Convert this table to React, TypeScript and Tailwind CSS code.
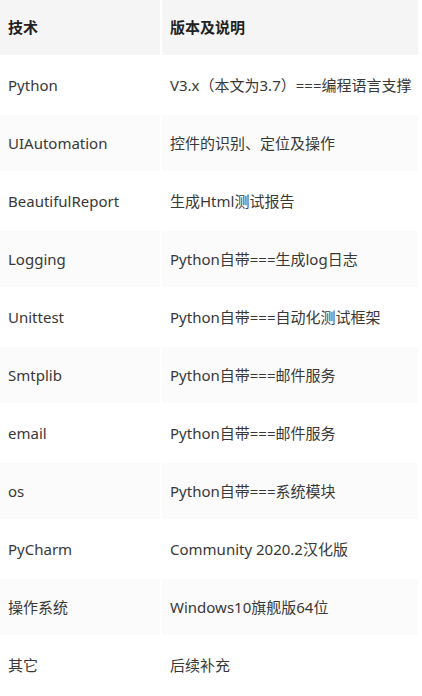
const rows: [string, string][] = [
  ["Python", "V3.x（本文为3.7）===编程语言支撑"],
  ["UIAutomation", "控件的识别、定位及操作"],
  ["BeautifulReport", "生成Html测试报告"],
  ["Logging", "Python自带===生成log日志"],
  ["Unittest", "Python自带===自动化测试框架"],
  ["Smtplib", "Python自带===邮件服务"],
  ["email", "Python自带===邮件服务"],
  ["os", "Python自带===系统模块"],
  ["PyCharm", "Community 2020.2汉化版"],
  ["操作系统", "Windows10旗舰版64位"],
  ["其它", "后续补充"],
];

export default function App() {
  return (
    <div
      className="w-[422px] h-[696px] bg-white text-[#383838] text-[15px] overflow-hidden"
      style={{ fontFamily: '"Noto Sans", "Noto Sans CJK SC", sans-serif' }}
    >
      <div className="grid grid-cols-[160px_256px] gap-[2px]">
        <div className="h-[55px] flex items-center pl-2 bg-[#f5f5f5] font-bold text-[#222]">技术</div>
        <div className="h-[55px] flex items-center pl-2 bg-[#f5f5f5] font-bold text-[#222]">版本及说明</div>
        {rows.map(([a, b], i) => (
          <Row key={a + i} a={a} b={b} shade={i % 2 === 1} />
        ))}
      </div>
    </div>
  );
}

function Row({ a, b, shade }: { a: string; b: string; shade: boolean }) {
  const bg = shade ? "bg-[#fbfbfb]" : "bg-white";
  return (
    <>
      <div className={`h-[56px] flex items-center pl-2 whitespace-nowrap ${bg}`}>{a}</div>
      <div className={`h-[56px] flex items-center pl-2 whitespace-nowrap ${bg}`}>{b}</div>
    </>
  );
}
